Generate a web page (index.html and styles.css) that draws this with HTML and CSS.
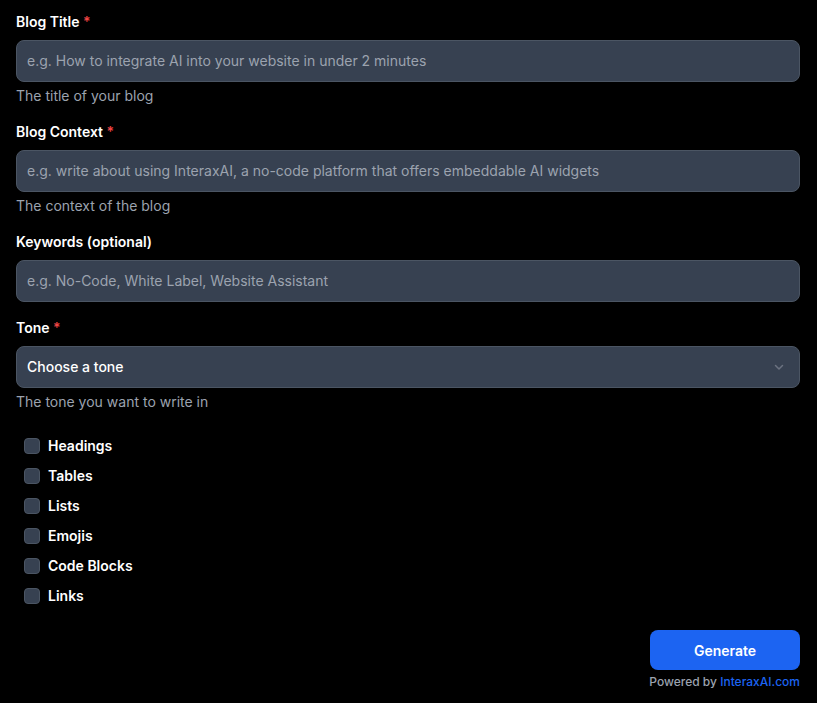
FILE: index.html
```html
<!DOCTYPE html>
<html lang="en">
<head>
<meta charset="utf-8">
<title>Blog Generator</title>
<link rel="stylesheet" href="styles.css">
</head>
<body>
<form class="form">
  <div class="field">
    <label class="label">Blog Title <span class="req">*</span></label>
    <input class="input" type="text" placeholder="e.g. How to integrate AI into your website in under 2 minutes">
    <p class="help">The title of your blog</p>
  </div>
  <div class="field">
    <label class="label">Blog Context <span class="req">*</span></label>
    <input class="input" type="text" placeholder="e.g. write about using InteraxAI, a no-code platform that offers embeddable AI widgets">
    <p class="help">The context of the blog</p>
  </div>
  <div class="field">
    <label class="label">Keywords (optional)</label>
    <input class="input" type="text" placeholder="e.g. No-Code, White Label, Website Assistant">
  </div>
  <div class="field">
    <label class="label">Tone <span class="req">*</span></label>
    <div class="select">
      <span>Choose a tone</span>
      <svg class="chev" width="12" height="12" viewBox="0 0 12 12" fill="none"><path d="M2.5 4.5 6 8l3.5-3.5" stroke="#6b7280" stroke-width="1.5" stroke-linecap="round" stroke-linejoin="round"/></svg>
    </div>
    <p class="help">The tone you want to write in</p>
  </div>
  <div class="checks">
    <label class="check"><span class="box"></span>Headings</label>
    <label class="check"><span class="box"></span>Tables</label>
    <label class="check"><span class="box"></span>Lists</label>
    <label class="check"><span class="box"></span>Emojis</label>
    <label class="check"><span class="box"></span>Code Blocks</label>
    <label class="check"><span class="box"></span>Links</label>
  </div>
  <div class="actions">
    <button class="btn" type="button">Generate</button>
    <p class="powered">Powered by <a href="#">InteraxAI.com</a></p>
  </div>
</form>
</body>
</html>
```
FILE: styles.css
```css
* { box-sizing: border-box; }
html, body { margin: 0; background: #000; }
body {
  font-family: Inter, "Noto Sans", sans-serif;
  color: #fff;
  font-size: 14px;
  line-height: 20px;
}
.form {
  padding: 12px 17px 0 16px;
  display: flex;
  flex-direction: column;
}
.field { margin-bottom: 16px; }
.label {
  display: block;
  font-weight: 600;
  font-size: 14px;
  line-height: 20px;
  margin-bottom: 8px;
}
.req { color: #ef4444; }
.input, .select {
  display: block;
  width: 100%;
  height: 42px;
  background: #374151;
  border: 1px solid #4b5563;
  border-radius: 8px;
  padding: 9px 10px 11px;
  font-family: inherit;
  font-size: 14px;
  line-height: 20px;
  color: #fff;
  outline: none;
}
.input::placeholder { color: #9ca3af; }
.select {
  display: flex;
  align-items: center;
  justify-content: space-between;
  font-weight: 500;
  padding: 10px 14px 10px 10px;
}
.help {
  margin: 4px 0 0;
  color: #9ca3af;
  font-size: 14px;
  line-height: 20px;
}
.checks {
  display: flex;
  flex-direction: column;
  gap: 10px;
  padding: 8px 0 0 8px;
}
.check {
  display: flex;
  align-items: center;
  gap: 8px;
  font-weight: 600;
  line-height: 20px;
}
.box {
  width: 16px;
  height: 16px;
  border-radius: 4px;
  background: #374151;
  border: 1px solid #4b5563;
}
.actions {
  display: flex;
  flex-direction: column;
  align-items: flex-end;
  margin-top: 24px;
}
.btn {
  width: 150px;
  height: 40px;
  background: #1c64f2;
  color: #fff;
  border: 0;
  border-radius: 8px;
  font-family: inherit;
  font-size: 14px;
  font-weight: 600;
}
.powered {
  margin: 4px 0 0;
  font-size: 12px;
  line-height: 16px;
  color: #9ca3af;
  font-weight: 500;
}
.powered a { color: #1c64f2; text-decoration: none; }
```
